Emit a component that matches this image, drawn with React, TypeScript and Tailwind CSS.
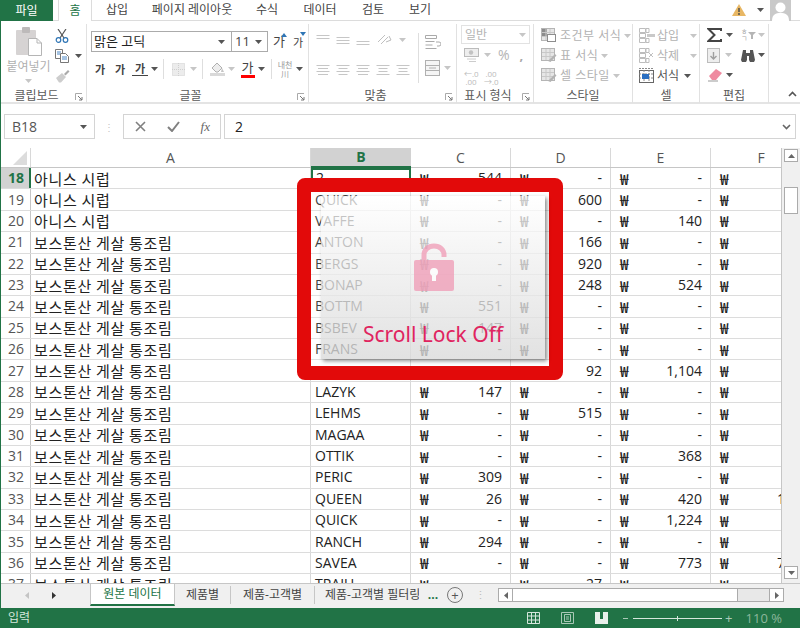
const FONT = "font-['Open_Sans','Noto_Sans_CJK_KR',sans-serif]";
const KR = "font-['Noto_Sans_CJK_KR','Noto_Sans',sans-serif]";

type Row = [number, string, string, string, string, string, string];

const rows: Row[] = [
  [18, "아니스 시럽", "2", "544", "-", "-", ""],
  [19, "아니스 시럽", "QUICK", "-", "600", "-", ""],
  [20, "아니스 시럽", "VAFFE", "-", "-", "140", ""],
  [21, "보스톤산 게살 통조림", "ANTON", "-", "166", "-", ""],
  [22, "보스톤산 게살 통조림", "BERGS", "-", "920", "-", ""],
  [23, "보스톤산 게살 통조림", "BONAP", "-", "248", "524", ""],
  [24, "보스톤산 게살 통조림", "BOTTM", "551", "-", "-", ""],
  [25, "보스톤산 게살 통조림", "BSBEV", "147", "-", "-", ""],
  [26, "보스톤산 게살 통조림", "FRANS", "-", "-", "-", ""],
  [27, "보스톤산 게살 통조림", "HILAA", "-", "92", "1,104", ""],
  [28, "보스톤산 게살 통조림", "LAZYK", "147", "-", "-", ""],
  [29, "보스톤산 게살 통조림", "LEHMS", "-", "515", "-", ""],
  [30, "보스톤산 게살 통조림", "MAGAA", "-", "-", "-", ""],
  [31, "보스톤산 게살 통조림", "OTTIK", "-", "-", "368", ""],
  [32, "보스톤산 게살 통조림", "PERIC", "309", "-", "-", ""],
  [33, "보스톤산 게살 통조림", "QUEEN", "26", "-", "420", "1"],
  [34, "보스톤산 게살 통조림", "QUICK", "-", "-", "1,224", ""],
  [35, "보스톤산 게살 통조림", "RANCH", "294", "-", "-", ""],
  [36, "보스톤산 게살 통조림", "SAVEA", "-", "-", "773", "7"],
  [37, "보스톤산 게살 통조림", "TRAIU", "-", "27", "-", ""],
];

function Caret({ dim = false }: { dim?: boolean }) {
  return (
    <svg width="7" height="4" viewBox="0 0 7 4" className="shrink-0">
      <path d="M0 0h7L3.5 4z" fill={dim ? "#c6c6c6" : "#555"} />
    </svg>
  );
}

function Launcher() {
  return (
    <svg width="8" height="8" viewBox="0 0 8 8" className="shrink-0">
      <path d="M.5 7V.5H7" stroke="#aaa" fill="none" />
      <path d="M3 3l4 4M4 7h3V4" stroke="#777" fill="none" />
    </svg>
  );
}

function Lines({ rows, w = 14, color = "#c6c6c6" }: { rows: [number, number][]; w?: number; color?: string }) {
  return (
    <svg width={w} height="12" viewBox={`0 0 ${w} 12`} className="shrink-0">
      {rows.map(([y, l], i) => (
        <path key={i} d={`M${(w - l) / 2} ${y + 0.5}h${l}`} stroke={color} />
      ))}
    </svg>
  );
}

function Group({ w, label, launcher, children }: { w: string; label: string; launcher?: boolean; children: React.ReactNode }) {
  return (
    <div className={`${w} shrink-0 h-[79px] flex flex-col border-r border-[#e1e1e1]`}>
      <div className="h-[65px] flex">{children}</div>
      <div className={`flex-1 flex items-center justify-center relative text-[12px] text-[#5a5a5a] leading-none ${launcher ? "pr-[14px]" : ""}`}>
        {label}
        {launcher && (
          <span className="absolute right-[3px] top-[4px] flex">
            <Launcher />
          </span>
        )}
      </div>
    </div>
  );
}

function GaIcon({ color = "#444" }: { color?: string }) {
  return <span className="text-[11px] font-bold leading-none" style={{ color }}>가</span>;
}

function DocIcon({ kind }: { kind: "cond" | "table" | "cell" }) {
  return (
    <svg width="16" height="15" viewBox="0 0 16 15" className="shrink-0">
      <rect x=".5" y=".5" width="13" height="12" fill="#e6e6e6" stroke="#b5b5b5" />
      {kind === "cond" && <rect x="1" y="1" width="5" height="7" fill="#8c8c8c" />}
      <path d="M1 4.5h12M1 8.5h12M5 1v11M9 1v11" stroke="#c8c8c8" />
      {kind === "cond" && <rect x="6.5" y="6.5" width="8" height="7" fill="#fff" stroke="#8d8d8d" />}
      {kind !== "cond" && <path d="M7 13l7-7 1.5 1.5-6 6.5z" fill="#b3b3b3" />}
    </svg>
  );
}

function CellIcon({ kind }: { kind: "ins" | "del" }) {
  return (
    <svg width="17" height="15" viewBox="0 0 17 15" className="shrink-0">
      <path d="M.5.5h6v4h-6zM.5 5.5h6v4h-6zM.5 10.5h6v4h-6zM7 .5h3v4H7zM7 10.5h3v4H7z" fill="none" stroke="#bdbdbd" />
      {kind === "ins" ? (
        <path d="M8 6h8v3H8z" fill="#c9c9c9" />
      ) : (
        <path d="M10 5l4 4M14 5l-4 4" stroke="#c0c0c0" />
      )}
    </svg>
  );
}

function Ribbon() {
  return (
    <div className="h-[83px] shrink-0 flex pt-[3px] pl-[1px] border-b-2 border-[#e4e4e4] bg-white">
      {/* 클립보드 */}
      <Group w="w-[86px]" label="클립보드" launcher>
        <div className="w-[53px] flex flex-col items-center pt-[3px] pl-[2px]">
          <svg width="26" height="29" viewBox="0 0 26 29">
            <rect x="0" y="3" width="20" height="25" rx="1" fill="#d6d3d3" />
            <rect x="6" y="0" width="8" height="6" rx="1" fill="#bdbaba" />
            <path d="M12.5 11.5H21l4.5 4.5v12.5h-13z" fill="#fff" stroke="#b5b5b5" />
            <path d="M21 11.5V16h4.5" fill="none" stroke="#b5b5b5" />
          </svg>
          <span className="text-[12px] text-[#b0b0b0] leading-none mt-[5px] whitespace-nowrap">붙여넣기</span>
          <span className="mt-[6px] flex"><Caret dim /></span>
        </div>
        <div className="flex flex-col gap-[6px] pt-[5px] pl-[1px]">
          <svg width="14" height="14" viewBox="0 0 14 14">
            <path d="M3 0l6 9M11 0L5 9" stroke="#555" strokeWidth="1.2" />
            <circle cx="3.5" cy="11" r="2.3" fill="none" stroke="#2f75b5" strokeWidth="1.2" />
            <circle cx="10.5" cy="11" r="2.3" fill="none" stroke="#2f75b5" strokeWidth="1.2" />
          </svg>
          <div className="flex items-center gap-[5px]">
            <svg width="15" height="14" viewBox="0 0 15 14">
              <path d="M.5.5h7v9h-7z" fill="#fff" stroke="#777" />
              <path d="M5.5 4.5h5l3 3v6h-8z" fill="#fff" stroke="#777" />
              <path d="M2 3h4M2 5h3M7 8h5M7 10h5" stroke="#4a86c5" />
            </svg>
            <Caret />
          </div>
          <svg width="15" height="14" viewBox="0 0 15 14">
            <path d="M9 5l4-4 1.5 1.5-4 4z" fill="#aaa" />
            <path d="M1 9l6-5 4 4-5 5.5H4z" fill="#cdcdcd" />
          </svg>
        </div>
      </Group>

      {/* 글꼴 */}
      <Group w="w-[222px]" label="글꼴" launcher>
        <div className="flex flex-col pl-[4px] pt-[7px]">
          <div className="flex items-center">
            <div className="w-[141px] h-[21px] border border-[#ababab] flex items-center justify-between pl-[2px] pr-[6px] text-[13px] text-[#222] leading-none">
              맑은 고딕
              <Caret />
            </div>
            <div className="w-[36px] h-[21px] border border-l-0 border-[#ababab] flex items-center justify-between pl-[3px] pr-[5px] text-[13px] leading-none text-[#444]">
              11
              <Caret />
            </div>
            <span className="ml-[5px] text-[13px] text-[#444] leading-none relative w-[14px]">
              가
              <svg width="6" height="4" viewBox="0 0 6 4" className="absolute -top-[2px] left-[8px]"><path d="M0 4l3-4 3 4z" fill="#2f75b5" /></svg>
            </span>
            <span className="ml-[6px] text-[11px] text-[#444] leading-none relative w-[14px] mt-[2px]">
              가
              <svg width="6" height="4" viewBox="0 0 6 4" className="absolute -top-[5px] left-[7px]"><path d="M0 0l3 4 3-4z" fill="#2f75b5" /></svg>
            </span>
          </div>
          <div className="flex items-center h-[20px] mt-[7px] -ml-px">
            <span className="w-[20px] text-center flex justify-center"><GaIcon /></span>
            <span className="w-[20px] text-center flex justify-center"><GaIcon /></span>
            <span className="w-[16px] flex justify-center border-b border-[#444] pb-[1px] mx-[2px]"><GaIcon /></span>
            <span className="ml-px"><Caret /></span>
            <span className="w-px h-[20px] bg-[#dedede] ml-[5px] mr-[8px]" />
            <svg width="13" height="13" viewBox="0 0 13 13" className="shrink-0">
              <rect x=".5" y=".5" width="12" height="12" fill="#ececec" stroke="#cfcfcf" strokeDasharray="1 1" />
              <path d="M6.5 0v13M0 6.5h13" stroke="#cfcfcf" strokeDasharray="1 1" />
            </svg>
            <span className="ml-[5px]"><Caret dim /></span>
            <span className="w-px h-[20px] bg-[#dedede] ml-[5px] mr-[7px]" />
            <svg width="15" height="16" viewBox="0 0 15 16" className="shrink-0">
              <path d="M2 7l5-5 5 5-4 4H6z" fill="#ededed" stroke="#b0b0b0" />
              <path d="M12 7l2 4h-3z" fill="#c5c5c5" />
              <rect x="0" y="12" width="15" height="3" fill="#d9d9d9" />
            </svg>
            <span className="ml-[3px]"><Caret dim /></span>
            <span className="w-[21px] ml-[2px] flex flex-col items-center">
              <span className="text-[13px] text-[#444] leading-none">가</span>
              <span className="w-[14px] h-[3px] bg-[#f00] mt-[1px]" />
            </span>
            <Caret />
            <span className="w-px h-[20px] bg-[#dedede] ml-[6px] mr-[5px]" />
            <span className="w-[16px] text-[8px] leading-[9px] text-[#999] text-center">내천<br />川</span>
            <span className="ml-[3px]"><Caret /></span>
          </div>
        </div>
      </Group>

      {/* 맞춤 */}
      <Group w="w-[148px]" label="맞춤" launcher>
        <div className="flex pl-[7px] pt-[9px]">
          <div className="w-[102px] flex flex-col gap-[17px]">
            <div className="flex items-center gap-[6px]">
              <Lines rows={[[1, 13], [4, 13]]} />
              <Lines rows={[[3, 13], [6, 13], [9, 13]]} />
              <Lines rows={[[7, 13], [10, 13]]} />
              <svg width="16" height="13" viewBox="0 0 16 13" className="shrink-0 ml-[1px]">
                <path d="M1 9l7-7M4 11l7-7" stroke="#c0c0c0" />
                <path d="M9 9l5-2-2-4" fill="none" stroke="#bbb" />
              </svg>
              <Caret dim />
            </div>
            <div className="flex items-center gap-[6px]">
              <Lines rows={[[2, 13], [5, 10], [8, 13], [11, 10]]} />
              <Lines rows={[[2, 13], [5, 9], [8, 13], [11, 9]]} />
              <Lines rows={[[2, 13], [5, 10], [8, 13], [11, 10]]} />
              <Lines rows={[[2, 13], [5, 9], [8, 9], [11, 13]]} />
              <Lines rows={[[2, 13], [5, 9], [8, 9], [11, 13]]} />
            </div>
          </div>
          <div className="border-l border-[#dedede] h-[50px] pl-[6px] flex flex-col gap-[10px] pt-[1px]">
            <svg width="16" height="16" viewBox="0 0 16 16">
              <path d="M.5 1.5h11v3H.5zM.5 7.5h9M.5 11h7M.5 14.5h11" stroke="#aaa" fill="none" />
              <path d="M11 8h3a2 2 0 010 4h-2" stroke="#aaa" fill="none" />
            </svg>
            <div className="flex items-center gap-[4px]">
              <svg width="15" height="16" viewBox="0 0 15 16">
                <rect x=".5" y=".5" width="14" height="15" fill="#f5f5f5" stroke="#b0b0b0" />
                <path d="M0 5.5h15M0 10.5h15M4 8h7" stroke="#b0b0b0" />
              </svg>
              <Caret dim />
            </div>
          </div>
        </div>
      </Group>

      {/* 표시 형식 */}
      <Group w="w-[77px]" label="표시 형식" launcher>
        <div className="flex flex-col pl-[4px] pt-[1px]">
          <div className="w-[69px] h-[19px] border border-[#e2e2e2] flex items-center justify-between pl-[3px] pr-[3px] text-[12px] text-[#b5b5b5] leading-none">
            일반
            <Caret dim />
          </div>
          <div className="flex items-center mt-[2px] h-[18px]">
            <svg width="15" height="15" viewBox="0 0 15 15" className="ml-[3px] shrink-0">
              <rect x=".5" y=".5" width="14" height="8" fill="#eee" stroke="#bbb" />
              <circle cx="7" cy="4.5" r="2.2" fill="#c2c2c2" />
              <path d="M3 11h9M5 13.5h7" stroke="#ccc" />
            </svg>
            <span className="ml-[5px]"><Caret dim /></span>
            <span className="ml-[7px] text-[14px] text-[#b4b4b4] leading-none">%</span>
            <span className="ml-[10px] text-[13px] font-bold text-[#a8a8a8] leading-none">,</span>
          </div>
          <div className="flex gap-[6px] mt-[6px] pl-[3px] text-[8px] leading-[8px] text-[#bbb]">
            <span className="w-[14px] text-center">←.0<br />.00</span>
            <span className="w-[14px] text-center">.00<br />→.0</span>
          </div>
        </div>
      </Group>

      {/* 스타일 */}
      <Group w="w-[99px]" label="스타일">
        <div className="flex flex-col gap-[5px] pl-[7px] pt-[4px] text-[12px] tracking-[0.5px] leading-none text-[#b2b2b2] whitespace-nowrap">
          <div className="flex items-center gap-[3px] h-[15px]"><DocIcon kind="cond" />조건부 서식<Caret dim /></div>
          <div className="flex items-center gap-[3px] h-[15px]"><DocIcon kind="table" />표 서식<Caret dim /></div>
          <div className="flex items-center gap-[3px] h-[15px]"><DocIcon kind="cell" />셀 스타일<Caret dim /></div>
        </div>
      </Group>

      {/* 셀 */}
      <Group w="w-[67px]" label="셀">
        <div className="flex flex-col gap-[5px] pl-[6px] pt-[4px] text-[12px] leading-none text-[#b2b2b2]">
          <div className="flex items-center gap-[1px] h-[15px]"><CellIcon kind="ins" />삽입<span className="ml-[10px]"><Caret dim /></span></div>
          <div className="flex items-center gap-[1px] h-[15px]"><CellIcon kind="del" />삭제<span className="ml-[10px]"><Caret dim /></span></div>
          <div className="flex items-center gap-[3px] h-[15px] text-[#555]">
            <svg width="15" height="15" viewBox="0 0 15 15" className="shrink-0">
              <rect x=".5" y="2.5" width="14" height="12" fill="#fff" stroke="#666" />
              <path d="M0 .5h15M0 6h15M0 10h15M5 2v12M10 2v12" stroke="#8a8a8a" strokeDasharray="2 1" />
              <rect x="3" y="6" width="7" height="5" fill="#2b6fc1" />
            </svg>
            서식
            <span className="ml-[2px]"><Caret /></span>
          </div>
        </div>
      </Group>

      {/* 편집 */}
      <Group w="w-[69px]" label="편집">
        <div className="flex flex-col gap-[4px] pl-[7px] pt-[3px]">
          <div className="flex items-center h-[16px]">
            <svg width="15" height="14" viewBox="0 0 15 14">
              <path d="M14 3V1H1.5l6 6-6 6H14v-2" fill="none" stroke="#444" strokeWidth="2" />
            </svg>
            <span className="ml-[4px]"><Caret /></span>
            <span className="ml-[8px] text-[7px] leading-[7px] text-[#aaa]">ㅎ<br />ㄱ</span>
            <svg width="8" height="7" viewBox="0 0 8 7" className="ml-[1px]"><path d="M0 0h8L5 3v4H3V3z" fill="#b5b5b5" /></svg>
            <span className="ml-[2px]"><Caret dim /></span>
          </div>
          <div className="flex items-center h-[16px]">
            <svg width="14" height="15" viewBox="0 0 14 15">
              <rect x=".5" y=".5" width="12" height="14" fill="#eee" stroke="#bcbcbc" />
              <path d="M6.5 4v7M3.5 8l3 3 3-3" fill="none" stroke="#9f9f9f" strokeWidth="1.4" />
            </svg>
            <span className="ml-[4px]"><Caret dim /></span>
            <svg width="14" height="13" viewBox="0 0 14 13" className="ml-[9px]">
              <path d="M2 1h3v3h4V1h3l2 10-1 2H9l-1-2V7H6v4l-1 2H1l-1-2z" fill="#555" />
            </svg>
            <span className="ml-[3px]"><Caret /></span>
          </div>
          <div className="flex items-center h-[16px]">
            <svg width="15" height="14" viewBox="0 0 15 14" className="ml-[1px]">
              <path d="M1 8l7-7 6 4-6 7H4z" fill="#ef8aa0" />
              <path d="M0 13h10" stroke="#999" />
            </svg>
            <span className="ml-[3px]"><Caret /></span>
          </div>
        </div>
      </Group>

      <div className="flex-1 flex items-end justify-center pb-[5px] pl-[16px]">
        <svg width="9" height="6" viewBox="0 0 9 6"><path d="M1 5l3.5-3.5L8 5" fill="none" stroke="#555" strokeWidth="1.6" /></svg>
      </div>
    </div>
  );
}

function TitleTabs() {
  const tabs: [string, string][] = [
    ["삽입", "w-[50px]"],
    ["페이지 레이아웃", "w-[100px]"],
    ["수식", "w-[50px]"],
    ["데이터", "w-[56px]"],
    ["검토", "w-[50px]"],
    ["보기", "w-[44px]"],
  ];
  return (
    <div className="h-[21px] shrink-0 flex bg-white border-b border-[#dcdcdc] text-[12px] text-[#444] leading-none">
      <div className="w-[53px] h-[21px] bg-[#217346] text-white flex items-center justify-center">파일</div>
      <div className="ml-[5px] w-[34px] h-[21px] border-x border-[#dcdcdc] bg-white text-[#217346] flex items-center justify-center z-10">홈</div>
      {tabs.map(([t, w]) => (
        <div key={t} className={`${w} flex items-center justify-center whitespace-nowrap`}>{t}</div>
      ))}
      <div className="ml-auto flex items-center pr-[9px]">
        <svg width="14" height="12" viewBox="0 0 14 12"><path d="M7 0l7 12H0z" fill="#e8b764" /><path d="M7 4v4M7 9v2" stroke="#4a4a4a" strokeWidth="1.4" /></svg>
        <span className="ml-[11px]"><Caret /></span>
        <div className="ml-[6px] w-[21px] h-[21px] bg-[#c9c9c9] overflow-hidden">
          <svg width="21" height="21" viewBox="0 0 21 21">
            <circle cx="10.5" cy="7.5" r="5" fill="#fff" />
            <path d="M2 21c0-7 4-8 8.5-8s8.5 1 8.5 8z" fill="#fff" />
          </svg>
        </div>
      </div>
    </div>
  );
}

function FormulaBar() {
  return (
    <div className="h-[44px] shrink-0 flex items-center pl-[4px] pr-[4px] pt-[1px] bg-white">
      <div className="w-[91px] h-[25px] border border-[#d4d4d4] flex items-center justify-between px-[7px] text-[14px] text-[#555] leading-none">
        B18
        <Caret />
      </div>
      <span className="w-[28px] text-center text-[#c4c4c4] text-[10px] leading-[4px]">⋮</span>
      <div className="w-[98px] h-[25px] border border-[#d4d4d4] flex items-center justify-between pl-[11px] pr-[10px]">
        <svg width="11" height="11" viewBox="0 0 11 11"><path d="M1 1l9 9M10 1l-9 9" stroke="#808080" strokeWidth="1.6" /></svg>
        <svg width="13" height="11" viewBox="0 0 13 11"><path d="M1 6l4 4 7-9" fill="none" stroke="#808080" strokeWidth="2" /></svg>
        <span className="font-['Liberation_Serif',serif] italic text-[13px] text-[#666] leading-none">fx</span>
      </div>
      <div className="ml-[3px] flex-1 h-[25px] border border-[#d4d4d4] flex items-center justify-between pl-[10px] pr-[4px] text-[14px] text-[#222] leading-none">
        2
        <svg width="9" height="6" viewBox="0 0 9 6"><path d="M1 1l3.5 3.5L8 1" fill="none" stroke="#666" strokeWidth="1.6" /></svg>
      </div>
    </div>
  );
}

function Won() {
  return <span className={`${KR} text-[15px] text-[#222] font-medium leading-none`}>₩</span>;
}

function Money({ value, clipped }: { value: string; clipped?: string }) {
  return (
    <div className="w-[100px] shrink-0 h-full border-r border-[#d8d8d8] flex items-center justify-between pl-[9px] pr-[8px] overflow-hidden">
      <Won />
      <span>{value}{clipped}</span>
    </div>
  );
}

function Sheet() {
  const headers = ["C", "D", "E"];
  return (
    <div className="flex-1 min-h-0 flex bg-white overflow-hidden">
      <div className="w-[781px] shrink-0 flex flex-col overflow-hidden">
        <div className="h-[20px] shrink-0 flex items-center text-[14px] text-[#555] leading-none border-b border-[#c6c6c6]">
          <div className="w-[31px] h-full flex items-end justify-end pr-[3px] pb-[2px] border-r border-[#d8d8d8]">
            <svg width="14" height="14" viewBox="0 0 14 14"><path d="M14 0v14H0z" fill="#dcdcdc" /></svg>
          </div>
          <div className="w-[280px] h-full flex items-center justify-center border-r border-[#d8d8d8]">A</div>
          <div className="w-[100px] h-[20px] flex items-center justify-center bg-[#d2d2d2] text-[#217346] font-bold border-b-2 border-[#217346]">B</div>
          {headers.map((h) => (
            <div key={h} className="w-[100px] h-full flex items-center justify-center border-r border-[#d8d8d8]">{h}</div>
          ))}
          <div className="flex-1 text-center pl-[30px]">F</div>
        </div>
        {rows.map(([n, a, b, c, d, e, f]) => (
          <div key={n} className="h-[21.375px] shrink-0 flex items-center border-b border-[#dcdcdc] text-[14px] text-[#222] leading-none whitespace-nowrap">
            <div className={n === 18
              ? "w-[31px] h-full flex items-center justify-end pr-[5px] bg-[#d2d2d2] text-[#217346] font-bold border-r-2 border-[#217346]"
              : "w-[31px] h-full flex items-center justify-end pr-[6px] text-[#555] border-r border-[#c6c6c6]"}>{n}</div>
            <div className={`w-[280px] h-full flex items-center pl-[3px] border-r border-[#d8d8d8] ${KR} text-[15px] tracking-[0.7px]`}>{a}</div>
            <div className={n === 18
              ? "w-[100px] h-full flex items-center pl-[3px] border-2 border-[#217346]"
              : "w-[100px] h-full flex items-center pl-[4px] border-r border-[#d8d8d8]"}>{b}</div>
            <Money value={c} />
            <Money value={d} />
            <Money value={e} />
            <div className="flex-1 flex items-center justify-between pl-[9px] overflow-hidden">
              <Won />
              <span className="-mr-[4px]">{f}</span>
            </div>
          </div>
        ))}
      </div>
      <div className="flex-1 flex flex-col bg-[#f0f0f0] border-l border-[#c6c6c6] pl-[1px] pr-[1px] pt-[1px]">
        <div className="h-[13px] w-[14px] ml-px border border-[#ababab] bg-white flex items-center justify-center">
          <svg width="7" height="4" viewBox="0 0 7 4"><path d="M0 4h7L3.5 0z" fill="#666" /></svg>
        </div>
        <div className="h-[27px] w-[14px] ml-px mt-[25px] border border-[#ababab] bg-white" />
        <div className="flex-1" />
        <div className="h-[13px] w-[14px] ml-px mb-[4px] border border-[#ababab] bg-white flex items-center justify-center">
          <svg width="7" height="4" viewBox="0 0 7 4"><path d="M0 0h7L3.5 4z" fill="#666" /></svg>
        </div>
      </div>
    </div>
  );
}

function SheetTabs() {
  return (
    <div className="h-[25px] shrink-0 flex items-start bg-[#f0f0f0] border-t border-[#c6c6c6] text-[12px] leading-none text-[#444]">
      <div className="w-[90px] h-[22px] flex items-center pl-[25px] gap-[23px]">
        <svg width="4" height="7" viewBox="0 0 4 7"><path d="M4 0v7L0 3.5z" fill="#c4c4c4" /></svg>
        <svg width="4" height="7" viewBox="0 0 4 7"><path d="M0 0v7l4-3.5z" fill="#333" /></svg>
      </div>
      <div className="w-[85px] h-[22px] bg-white border-x border-b-2 border-[#c6c6c6] border-b-[#217346] text-[#217346] flex items-center justify-center whitespace-nowrap">원본 데이터</div>
      <div className="w-[56px] h-[18px] mt-[2px] flex items-center justify-center border-r border-[#c6c6c6]">제품별</div>
      <div className="w-[84px] h-[18px] mt-[2px] flex items-center justify-center border-r border-[#c6c6c6] whitespace-nowrap">제품-고객별</div>
      <div className="w-[104px] h-[22px] flex items-center pl-[10px] overflow-hidden whitespace-nowrap">제품-고객별 필터링</div>
      <div className="w-[28px] h-[22px] flex items-center justify-center text-[#217346] font-bold">...</div>
      <div className="w-[16px] h-[16px] mt-[3px] rounded-full border border-[#777] flex items-center justify-center text-[#555] text-[13px]">+</div>
      <span className="w-[35px] text-center text-[#bcbcbc] text-[11px] mt-[5px]">⋮</span>
      <div className="w-[286px] h-[14px] mt-[4px] flex border border-[#ababab] bg-[#e8e8e8]">
        <div className="w-[14px] border-r border-[#ababab] bg-white flex items-center justify-center">
          <svg width="4" height="7" viewBox="0 0 4 7"><path d="M4 0v7L0 3.5z" fill="#666" /></svg>
        </div>
        <div className="w-[225px] bg-white border-r border-[#ababab]" />
        <div className="flex-1" />
        <div className="w-[14px] border-l border-[#ababab] bg-white flex items-center justify-center">
          <svg width="4" height="7" viewBox="0 0 4 7"><path d="M0 0v7l4-3.5z" fill="#666" /></svg>
        </div>
      </div>
    </div>
  );
}

function StatusBar() {
  return (
    <div className="h-[20px] shrink-0 bg-[#217346] flex items-center pl-[8px] text-[12px] text-[#d6e6dc] leading-none">
      <span>입력</span>
      <div className="ml-[497px] flex items-center">
        <svg width="13" height="12" viewBox="0 0 13 12"><path d="M.5.5h12v11H.5zM4.5 0v12M8.5 0v12M0 4h13M0 8h13" fill="none" stroke="#d6e6dc" /></svg>
        <svg width="13" height="12" viewBox="0 0 13 12" className="ml-[21px]"><path d="M.5.5h12v11H.5z" fill="none" stroke="#a9c8b6" /><path d="M3.5 2.5h6v7h-6zM5 5h3M5 7h3" fill="none" stroke="#a9c8b6" /></svg>
        <svg width="13" height="12" viewBox="0 0 13 12" className="ml-[21px]"><rect width="13" height="12" fill="#e8f0ea" /><path d="M5 0h3v7H5z" fill="#217346" /></svg>
        <span className="ml-[15px] w-[5px] h-px bg-[#a9c8b6]" />
        <div className="ml-[5px] w-[89px] h-px bg-[#d6e6dc] flex justify-center items-center">
          <span className="w-px h-[5px] bg-[#d6e6dc]" />
        </div>
        <span className="ml-[3px] text-[#a9c8b6] text-[13px]">+</span>
        <span className="ml-[13px] text-[#8cb79c] text-[13px] font-['Open_Sans',sans-serif]">110 %</span>
      </div>
    </div>
  );
}

function ScrollLockOverlay() {
  return (
    <div className="absolute left-[297px] top-[178px] w-[266px] h-[202px] rounded-[8px] border-[14px] border-[#e20a0a]">
      <div className="w-full h-full bg-white/15 pl-[10px] pt-[4px]">
        <div className="w-[224px] h-[163px] bg-gradient-to-b from-white/70 to-[#d8d8d8]/75 shadow-[2px_2px_4px_rgba(0,0,0,0.45)] flex flex-col items-center">
          <svg width="40" height="48" viewBox="0 0 40 48" className="mt-[47px] ml-[2px] shrink-0 opacity-75">
            <path d="M10 18v-6c0-5 4-9 10-9s10 4 10 9v2" fill="none" stroke="#f09ab5" strokeWidth="5" />
            <path d="M2 17h36a2 2 0 012 2v27a2 2 0 01-2 2H2a2 2 0 01-2-2V19a2 2 0 012-2z" fill="#f09ab5" />
            <circle cx="20" cy="29" r="4" fill="#fff" />
            <rect x="18" y="30" width="4" height="8" fill="#fff" />
          </svg>
          <span className="mt-[33px] text-[21px] leading-none text-[#e0245f] whitespace-nowrap font-['Noto_Sans',sans-serif]">Scroll Lock Off</span>
        </div>
      </div>
    </div>
  );
}

export default function App() {
  return (
    <div className={`relative w-[800px] h-[628px] overflow-hidden flex flex-col bg-white ${FONT}`}>
      <TitleTabs />
      <Ribbon />
      <FormulaBar />
      <Sheet />
      <SheetTabs />
      <StatusBar />
      <ScrollLockOverlay />
      <div className="absolute left-0 top-[21px] w-px h-[587px] bg-[#217346]" />
    </div>
  );
}
